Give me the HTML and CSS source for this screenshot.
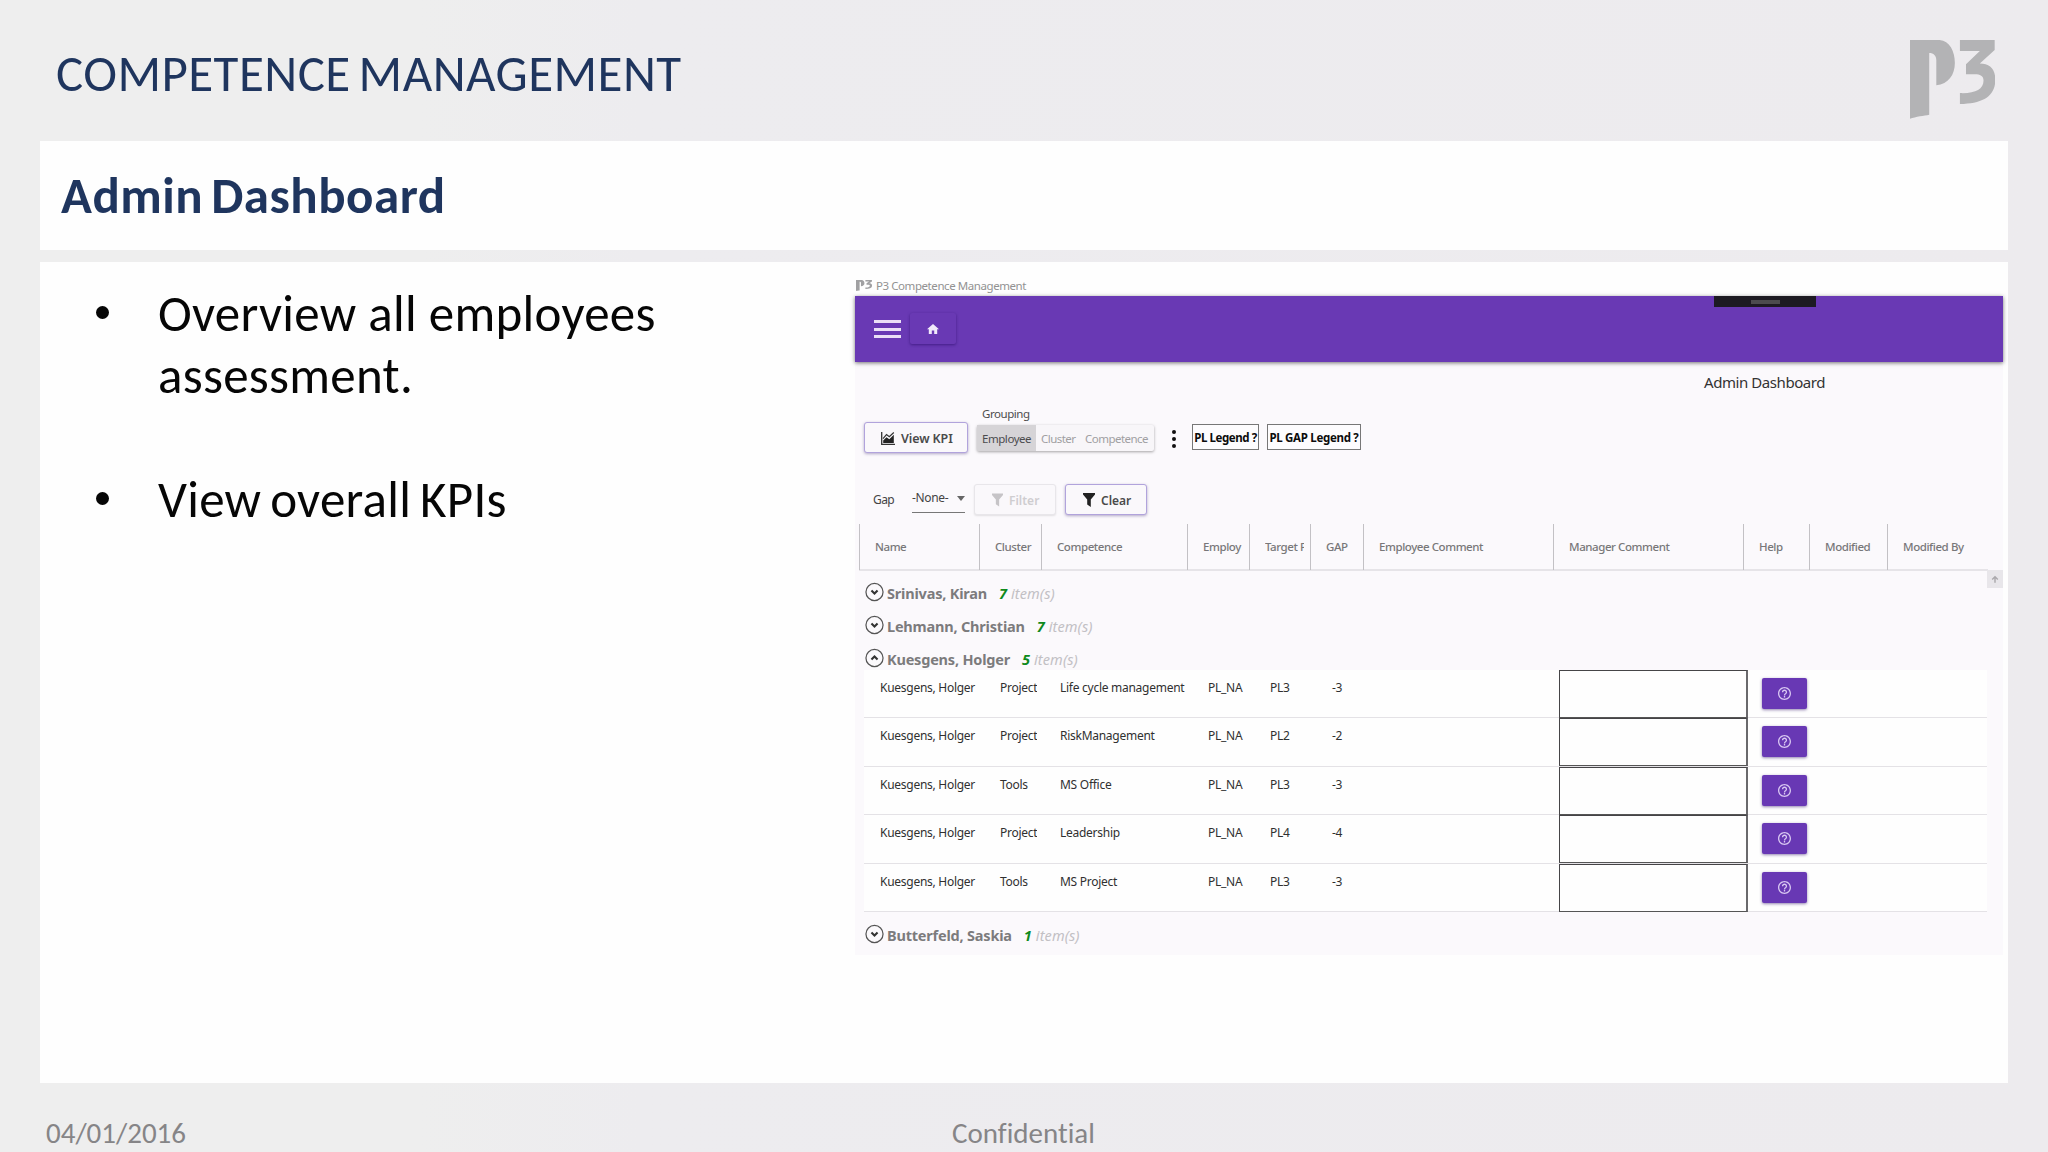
FILE: index.html
```html
<!DOCTYPE html>
<html lang="en">
<head>
<meta charset="utf-8">
<title>Competence Management</title>
<link rel="stylesheet" href="styles.css">
</head>
<body>
<svg class="sprite" aria-hidden="true">
  <symbol id="p3" viewBox="148 121 252 238" preserveAspectRatio="none">
    <path d="M148 121H236C265 123 281 155 281 190C281 225 262 254 226 257V182C226 168 218 160 205 160V346C190 349 165 352 148 358Z"/>
    <path d="M296 121H399V151L355 192C385 192 401 210 401 240C401 290 365 313 296 314V281C340 283 366 270 366 243C366 229 356 224 340 224H314V194L355 154H296Z"/>
  </symbol>
  <symbol id="funnel" viewBox="0 0 12 14"><path d="M0 0H12V1.6L7.8 6.5V14L4.2 11.5V6.5L0 1.6Z"/></symbol>
  <symbol id="down" viewBox="0 0 20 20"><circle cx="10" cy="10" r="9"/><path stroke="#333" stroke-width="2.2" d="M6.8 8.4L10 11.6L13.2 8.4"/></symbol>
  <symbol id="up" viewBox="0 0 20 20"><circle cx="10" cy="10" r="9"/><path stroke="#333" stroke-width="2.2" d="M6.8 11.6L10 8.4L13.2 11.6"/></symbol>
  <symbol id="help" viewBox="2 2 20 20"><path d="M11 18h2v-2h-2v2zm1-16C6.48 2 2 6.48 2 12s4.48 10 10 10 10-4.480 10-10S17.520 2 12 2zm0 18c-4.410 0-8-3.590-8-8s3.590-8 8-8 8 3.590 8 8-3.590 8-8 8zm0-14c-2.210 0-4 1.790-4 4h2c0-1.100.9-2 2-2s2 .9 2 2c0 2-3 1.750-3 5h2c0-2.250 3-2.500 3-5 0-2.210-1.790-4-4-4z"/></symbol>
</svg>

<header class="top">
  <h1>COMPETENCE MANAGEMENT</h1>
  <svg class="logo"><use href="#p3"/></svg>
</header>

<section class="panel subtitle"><h2>Admin Dashboard</h2></section>

<section class="panel content">
  <ul class="points">
    <li>Overview all employees<br>assessment.</li>
    <li class="tight">View overall KPIs</li>
  </ul>

  <div class="shot">
    <div class="caption"><svg><use href="#p3"/></svg><span>P3 Competence Management</span></div>
    <div class="app">
      <div class="appbar">
        <div class="burger"><i></i><i></i><i></i></div>
        <div class="home"><svg viewBox="2 3 20 17"><path d="M10 20v-6h4v6h5v-8h3L12 3 2 12h3v8z"/></svg></div>
        <div class="tab"><i></i></div>
      </div>
      <div class="pagetitle">Admin Dashboard</div>
      <div class="tools">
        <button class="btn kpi"><svg viewBox="0 0 14 13"><path d="M.7 0V12.300H14" fill="none" stroke="#333" stroke-width="1.300"/><path d="M2.200 11V8.500L5.500 5.300L8.300 7.300L12.800 2.800V11Z"/><path d="M2 6.600L5.500 2.600L8.300 4.800L12.800 .5" fill="none" stroke="#333" stroke-width="1.200"/></svg><span>View KPI</span></button>
        <div class="grouping">
          <label>Grouping</label>
          <div class="seg"><span class="on">Employee</span><span>Cluster</span><span>Competence</span></div>
        </div>
        <div class="dots"><i></i><i></i><i></i></div>
        <div class="legend">PL Legend ?</div>
        <div class="legend wide">PL GAP Legend ?</div>
      </div>
      <div class="filters">
        <span class="gaplabel">Gap</span>
        <div class="select"><span>-None-</span><i></i></div>
        <button class="btn filter off"><svg><use href="#funnel"/></svg><span>Filter</span></button>
        <button class="btn filter clear"><svg><use href="#funnel"/></svg><span>Clear</span></button>
      </div>
      <div class="thead">
        <div>Name</div><div>Cluster</div><div>Competence</div><div>Employ</div><div><span class="cut-target">Target P</span></div><div>GAP</div><div>Employee Comment</div><div>Manager Comment</div><div>Help</div><div>Modified</div><div>Modified By</div>
      </div>
      <div class="scroll"><svg viewBox="0 0 10 10"><path d="M5 9V2M1.500 5L5 1.500L8.500 5"/></svg></div>
      <div class="group"><svg><use href="#down"/></svg><b>Srinivas, Kiran</b><em>7</em><i>item(s)</i></div>
      <div class="group"><svg><use href="#down"/></svg><b>Lehmann, Christian</b><em>7</em><i>item(s)</i></div>
      <div class="group open"><svg><use href="#up"/></svg><b>Kuesgens, Holger</b><em>5</em><i>item(s)</i></div>
      <div class="rows">
        <div class="row"><div>Kuesgens, Holger</div><div><span class="cut">Project</span></div><div>Life cycle management</div><div>PL_NA</div><div>PL3</div><div>-3</div><div class="box"></div><div class="help"><svg><use href="#help"/></svg></div></div>
        <div class="row"><div>Kuesgens, Holger</div><div><span class="cut">Project</span></div><div>RiskManagement</div><div>PL_NA</div><div>PL2</div><div>-2</div><div class="box"></div><div class="help"><svg><use href="#help"/></svg></div></div>
        <div class="row"><div>Kuesgens, Holger</div><div>Tools</div><div>MS Office</div><div>PL_NA</div><div>PL3</div><div>-3</div><div class="box"></div><div class="help"><svg><use href="#help"/></svg></div></div>
        <div class="row"><div>Kuesgens, Holger</div><div><span class="cut">Project</span></div><div>Leadership</div><div>PL_NA</div><div>PL4</div><div>-4</div><div class="box"></div><div class="help"><svg><use href="#help"/></svg></div></div>
        <div class="row"><div>Kuesgens, Holger</div><div>Tools</div><div>MS Project</div><div>PL_NA</div><div>PL3</div><div>-3</div><div class="box"></div><div class="help"><svg><use href="#help"/></svg></div></div>
      </div>
      <div class="group last"><svg><use href="#down"/></svg><b>Butterfeld, Saskia</b><em>1</em><i>item(s)</i></div>
    </div>
  </div>
</section>

<footer><span class="date">04/01/2016</span><span>Confidential</span></footer>
</body>
</html>
```

FILE: styles.css
```css
* { box-sizing: border-box; }
body {
  margin: 0;
  width: 2048px;
  height: 1152px;
  overflow: hidden;
  display: flex;
  flex-direction: column;
  background: linear-gradient(90deg, #eee 0, #eee 420px, #edecef 640px, #edebee 100%);
  font-family: Carlito, Calibri, Lato, sans-serif;
  font-variant-ligatures: none;
}
.sprite { display: none; }
h1, h2, ul { margin: 0; padding: 0; }

.top { height: 141px; display: flex; justify-content: space-between; padding: 0 53px 0 56px; }
h1 { font-size: 51px; font-weight: 400; line-height: 148px; color: #1f355e; white-space: nowrap; letter-spacing: .45px; word-spacing: -4px; }
.logo { width: 85px; height: 79px; margin-top: 40px; fill: #b3b3b5; }

.panel { margin: 0 40px; background: #fefefe; flex: none; }
.subtitle { height: 109px; margin-bottom: 12px; padding-left: 21px; }
h2 { font-size: 51px; font-weight: 700; line-height: 109px; color: #1f355e; letter-spacing: .5px; word-spacing: -4px; }

.content { height: 821px; display: flex; }
.points { width: 815px; padding: 21px 0 0 53px; list-style: none; font-size: 51px; line-height: 62px; letter-spacing: .28px; color: #060606; }
.points li { margin-bottom: 62px; padding-left: 65px; position: relative; }
.points li::before { content: ""; position: absolute; left: 3px; top: 23px; width: 13px; height: 13px; border-radius: 50%; background: #060606; }
.points .tight { word-spacing: -3px; }

.shot { width: 1148px; font-family: "Noto Sans", "Open Sans", sans-serif; font-size: 11.5px; }
.caption { height: 34px; padding: 13px 0 0 1px; display: flex; align-items: center; gap: 4px; color: #929292; letter-spacing: -.43px; }
.caption svg { width: 16px; height: 11px; fill: #a0a0a2; }
.app { height: 659px; background: #fbf9fc; }

.appbar { height: 66px; display: flex; background: #6939b4; box-shadow: 0 1px 4px rgba(0,0,0,.55); }
.burger { width: 27px; margin: 24px 0 0 19px; display: flex; flex-direction: column; gap: 4.500px; }
.burger i { height: 3px; background: #eadff6; }
.home { width: 46px; height: 31px; margin: 17px 0 0 9px; border-radius: 2px; display: flex; align-items: center; justify-content: center; box-shadow: 0 1px 3px rgba(30,0,90,.5); }
.home svg { width: 12px; height: 12px; fill: #f1eafa; }
.tab { width: 102px; height: 11px; margin-left: auto; margin-right: 187px; background: #1d1a22; display: flex; justify-content: center; padding-top: 4px; }
.tab i { width: 29px; height: 4px; background: #4c4b4e; }

.pagetitle { height: 40px; line-height: 40px; padding-left: 849px; font-size: 15px; letter-spacing: -.43px; color: #333; }

.tools { height: 51px; display: flex; align-items: flex-end; padding-left: 9px; }
.btn { margin: 0; padding: 0; font: 600 12.5px "Noto Sans", "Open Sans", sans-serif; display: flex; align-items: center; border: 1px solid #b1a3dc; border-radius: 3px; background: #faf8fb; color: #4a4a4a; box-shadow: 0 1px 3px rgba(70,50,120,.4); fill: #222; }
.kpi { width: 104px; height: 31px; padding: 1px 0 0 16px; gap: 6px; letter-spacing: -.1px; }
.kpi svg { width: 14px; height: 13px; }
.grouping { width: 177px; margin: 0 0 2px 9px; }
.grouping label { display: block; line-height: 23px; padding-left: 5px; letter-spacing: -.45px; color: #4d4d4d; }
.seg { height: 26px; display: flex; border-radius: 2px; background: #f8f6f9; box-shadow: 0 1px 3px rgba(0,0,0,.35); color: #a09fa2; letter-spacing: -.53px; line-height: 27px; }
.seg span { padding-left: 5px; width: 44px; }
.seg .on { width: 59px; background: #d6d4d7; color: #4c4b4e; letter-spacing: -.45px; }
.seg span:last-child { width: auto; }
.dots { width: 4px; margin: 0 0 5px 18px; display: flex; flex-direction: column; gap: 3px; }
.dots i { height: 4px; border-radius: 50%; background: #111; }
.legend { width: 67px; height: 26px; margin: 0 0 3px 16px; border: 1px solid #777; line-height: 26px; font-weight: 700; letter-spacing: -.42px; text-align: center; color: #0c0c0c; background: #fdfcfe; white-space: nowrap; }
.legend.wide { width: 94px; margin-left: 8px; letter-spacing: -.3px; }

.filters { height: 30px; margin-top: 31px; padding-left: 18px; display: flex; line-height: 32px; font-size: 12px; color: #444; }
.gaplabel { width: 39px; letter-spacing: -.6px; }
.select { width: 53px; height: 29px; display: flex; justify-content: space-between; align-items: center; border-bottom: 1px solid #777; letter-spacing: -.35px; }
.select i { border: 4px solid transparent; border-top: 5px solid #666; border-bottom: 0; }
.filter { width: 82px; height: 31px; margin-left: 9px; padding: 1px 0 0 17px; gap: 6px; font-size: 12px; }
.filter svg { width: 12px; height: 14px; }
.off { border-color: #e8e6ea; color: #cfcdd0; fill: #c6c4c7; box-shadow: 0 1px 2px rgba(0,0,0,.1); }
.off svg { width: 11px; }
.clear { margin-left: 9px; }

.thead { width: 1129px; height: 47px; margin: 10px 0 0 4px; display: grid; grid-template-columns: 120px 62px 146px 62px 61px 53px 190px 190px 66px 78px 1fr; border-bottom: 2px solid #e6e4e8; font-weight: 500; line-height: 46px; letter-spacing: -.43px; color: #787779; white-space: nowrap; }
.thead div { border-left: 1px solid #c3c1c5; padding-left: 15px; }
.cut-target, .cut { display: block; overflow: hidden; }
.cut-target { width: 39px; }
.cut { width: 37px; }
.scroll { width: 16px; height: 18px; margin: -1px 0 -17px auto; background: #e8e6ea; display: flex; align-items: center; justify-content: center; }
.scroll svg { width: 8px; height: 9px; fill: none; stroke: #aaa8ac; stroke-width: 1.800px; }

.group { height: 20px; margin: 12px 0 13px 10px; display: flex; align-items: center; font-size: 14.500px; color: #7c7b7d; line-height: 20px; white-space: nowrap; }
.group + .group { margin-top: 0; }
.group svg { width: 19px; height: 20px; margin: -2px 3px 0 0; fill: none; stroke: #555; stroke-width: 1.300px; }
.group b { letter-spacing: -.2px; }
.group em { margin-left: 12px; font-weight: 700; color: #0f8a1c; }
.group i { margin-left: 4px; color: #c2c0c4; letter-spacing: .1px; }
.group.open { margin-bottom: 1px; }
.group.last { margin-top: 13px; }

.rows { width: 1123px; margin-left: 9px; font-size: 12px; letter-spacing: -.27px; color: #303030; }
.row { height: 48.400px; display: grid; grid-template-columns: 136px 60px 148px 62px 62px 227px 189px 1fr; background: #fefefe; border-bottom: 1.500px solid #e4e2e6; line-height: 35.500px; white-space: nowrap; }
.row > div:first-child { padding-left: 16px; }
.box { height: 48px; border: 1px solid #454447; border-right: 2px solid #6a696c; border-bottom-color: #555; }
.help { width: 45px; height: 31px; margin: 8px 0 0 14px; border-radius: 2px; background: #6838b4; box-shadow: 0 1px 3px rgba(40,10,100,.5); display: flex; align-items: center; justify-content: center; }
.help svg { width: 13px; height: 13px; fill: #d9c8f2; }

footer { display: flex; height: 69px; padding-left: 46px; font-size: 29px; line-height: 101px; color: #868587; }
.date { width: 906px; }
```
